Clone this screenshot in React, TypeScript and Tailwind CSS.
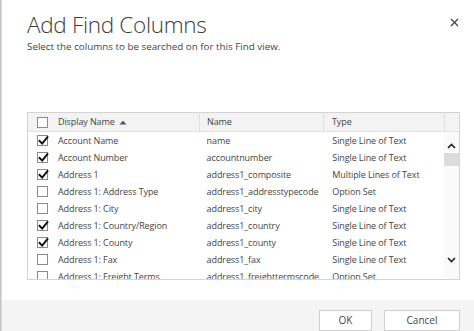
import React from "react";

type Row = { checked: boolean; display: string; name: string; type: string };

const rows: Row[] = [
  { checked: true, display: "Account Name", name: "name", type: "Single Line of Text" },
  { checked: true, display: "Account Number", name: "accountnumber", type: "Single Line of Text" },
  { checked: true, display: "Address 1", name: "address1_composite", type: "Multiple Lines of Text" },
  { checked: false, display: "Address 1: Address Type", name: "address1_addresstypecode", type: "Option Set" },
  { checked: false, display: "Address 1: City", name: "address1_city", type: "Single Line of Text" },
  { checked: true, display: "Address 1: Country/Region", name: "address1_country", type: "Single Line of Text" },
  { checked: true, display: "Address 1: County", name: "address1_county", type: "Single Line of Text" },
  { checked: false, display: "Address 1: Fax", name: "address1_fax", type: "Single Line of Text" },
  { checked: false, display: "Address 1: Freight Terms", name: "address1_freighttermscode", type: "Option Set" },
];

function Box({ checked }: { checked: boolean }) {
  return (
    <div className="relative w-[11px] h-[11px] border border-[#8a8a8a] bg-white shrink-0">
      {checked && (
        <svg className="absolute left-[0px] top-[-1px]" width="11" height="11" viewBox="0 0 11 11">
          <path d="M1.6 6 L4.2 8.6 L9.4 2.2" fill="none" stroke="#111" strokeWidth="2" strokeLinecap="square" />
        </svg>
      )}
    </div>
  );
}

export default function App() {
  return (
    <div
      className="w-[474px] h-[331px] flex bg-white overflow-hidden text-[#444]"
      style={{ fontFamily: '"Open Sans", "Noto Sans", sans-serif' }}
    >
      <div className="w-[1px] bg-[#c4c4c4]" />
      <div className="w-[1px] bg-[#8e8e8e]" />
      <div className="w-[1px] bg-[#dcdcdc]" />
      <div className="flex-1 flex flex-col">
        <div className="flex-1 flex flex-col pl-[25px] pr-[14px]">
          <div className="flex items-start justify-between">
            <div className="text-[22.5px] font-light leading-[30px] mt-[10px] text-[#3c3c3c] tracking-[-0.3px]">
              Add Find Columns
            </div>
            <svg className="mt-[18px] mr-[1px]" width="9" height="9" viewBox="0 0 9 9">
              <path d="M1 1 L8 8 M8 1 L1 8" stroke="#444" strokeWidth="1.3" />
            </svg>
          </div>
          <div className="text-[9.8px] leading-[14px] mt-[0px] text-[#444]">
            Select the columns to be searched on for this Find view.
          </div>
          <div className="mt-[58px] w-[433px] h-[168px] border border-[#d4d4d4] flex flex-col overflow-hidden">
            <div className="h-[19px] flex bg-[#f3f3f3] border-b border-[#e2e2e2] text-[9px] tracking-[-0.1px] shrink-0">
              <div className="w-[172px] flex items-center border-r border-[#e0e0e0]">
                <div className="pl-[9px]">
                  <Box checked={false} />
                </div>
                <span className="ml-[10px]">Display Name</span>
                <svg className="ml-[4px]" width="8" height="5" viewBox="0 0 8 5">
                  <path d="M0.5 4.5 L4 0.8 L7.5 4.5 Z" fill="#555" />
                </svg>
              </div>
              <div className="w-[124px] flex items-center pl-[7px] border-r border-[#e0e0e0]">Name</div>
              <div className="w-[121px] flex items-center pl-[8px] border-r border-[#e0e0e0]">Type</div>
              <div className="flex-1" />
            </div>
            <div className="flex-1 flex min-h-0">
              <div className="flex-1 flex flex-col text-[9px] tracking-[-0.1px] overflow-hidden">
                {rows.map((r) => (
                  <div key={r.name} className="h-[17px] flex items-center shrink-0">
                    <div className="w-[172px] flex items-center">
                      <div className="pl-[9px]">
                        <Box checked={r.checked} />
                      </div>
                      <span className="ml-[10px] whitespace-nowrap">{r.display}</span>
                    </div>
                    <div className="w-[124px] pl-[7px] whitespace-nowrap">{r.name}</div>
                    <div className="w-[121px] pl-[9px] whitespace-nowrap">{r.type}</div>
                  </div>
                ))}
              </div>
              <div className="w-[15px] flex flex-col items-center bg-[#fafafa]">
                <svg className="mt-[11px]" width="9" height="6" viewBox="0 0 9 6">
                  <path d="M1 5 L4.5 1.5 L8 5" fill="none" stroke="#222" strokeWidth="1.6" />
                </svg>
                <div className="mt-[4px] w-[15px] h-[13px] bg-[#dcdcdc]" />
                <div className="flex-1" />
                <svg className="mb-[16px]" width="9" height="6" viewBox="0 0 9 6">
                  <path d="M1 1 L4.5 4.5 L8 1" fill="none" stroke="#222" strokeWidth="1.6" />
                </svg>
              </div>
            </div>
          </div>
        </div>
        <div className="h-[31px] bg-[#f4f4f4] flex items-start justify-end pr-[14px] pt-[10px] gap-[12px] text-[10px]">
          <button className="w-[53px] h-[21px] bg-white border border-[#cfcfcf] text-[#444]">OK</button>
          <button className="w-[76px] h-[21px] bg-white border border-[#cfcfcf] text-[#444]">Cancel</button>
        </div>
      </div>
    </div>
  );
}
